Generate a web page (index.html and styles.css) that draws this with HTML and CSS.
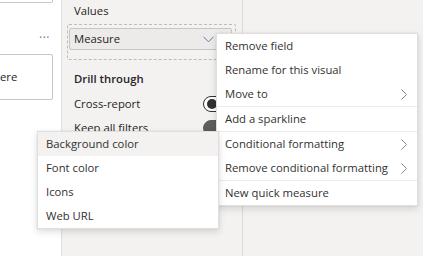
FILE: index.html
```html
<!DOCTYPE html>
<html>
<head>
<meta charset="utf-8">
<link rel="stylesheet" href="styles.css">
</head>
<body>
<div class="app">
  <div class="canvas">
    <div class="card-top"></div>
    <div class="more">···</div>
    <div class="card-drop"><span>ere</span></div>
  </div>
  <div class="pane">
    <div class="label">Values</div>
    <div class="well">
      <div class="field">
        <span>Measure</span>
        <svg class="chev" width="11" height="7" viewBox="0 0 11 7"><path d="M0.5 0.8 L5.5 5.8 L10.5 0.8" fill="none" stroke="#5b7fa8" stroke-width="1"/></svg>
      </div>
    </div>
    <div class="row heading">Drill through</div>
    <div class="row">
      <span>Cross-report</span>
      <span class="toggle off"><span class="knob"></span></span>
    </div>
    <div class="row">
      <span>Keep all filters</span>
      <span class="toggle on"><span class="knob"></span></span>
    </div>
  </div>
  <div class="rest"></div>
</div>

<div class="menu main-menu">
  <div class="item">Remove field</div>
  <div class="item">Rename for this visual</div>
  <div class="item sub">Move to<svg class="arrow" width="6" height="11" viewBox="0 0 6 11"><path d="M0.5 0.5 L5.5 5.5 L0.5 10.5" fill="none" stroke="#8a8886" stroke-width="1"/></svg></div>
  <div class="sep"></div>
  <div class="item">Add a sparkline</div>
  <div class="sep"></div>
  <div class="item sub">Conditional formatting<svg class="arrow" width="6" height="11" viewBox="0 0 6 11"><path d="M0.5 0.5 L5.5 5.5 L0.5 10.5" fill="none" stroke="#8a8886" stroke-width="1"/></svg></div>
  <div class="item sub">Remove conditional formatting<svg class="arrow" width="6" height="11" viewBox="0 0 6 11"><path d="M0.5 0.5 L5.5 5.5 L0.5 10.5" fill="none" stroke="#8a8886" stroke-width="1"/></svg></div>
  <div class="sep"></div>
  <div class="item">New quick measure</div>
</div>

<div class="menu sub-menu">
  <div class="item hover">Background color</div>
  <div class="item">Font color</div>
  <div class="item">Icons</div>
  <div class="item">Web URL</div>
</div>
</body>
</html>
```

FILE: styles.css
```css
* { box-sizing: border-box; }
html, body {
  margin: 0;
  padding: 0;
  width: 423px;
  height: 256px;
  overflow: hidden;
  background: #f3f2f1;
  font-family: "Open Sans", "Noto Sans", "Liberation Sans", sans-serif;
  font-size: 11.3px;
  color: #252423;
}
.app {
  display: flex;
  height: 256px;
}
.canvas {
  width: 62px;
  flex: none;
  background: #ffffff;
  border-right: 1px solid #e1dfdd;
  overflow: hidden;
  display: flex;
  flex-direction: column;
}
.card-top {
  width: 53px;
  height: 3px;
  border-right: 1px solid #c8c6c4;
  border-bottom: 1px solid #c8c6c4;
  border-bottom-right-radius: 2px;
}
.more {
  margin-top: 29px;
  width: 50px;
  text-align: right;
  color: #8a6bb0;
  font-size: 12px;
  line-height: 12px;
  letter-spacing: 0.5px;
}
.card-drop {
  margin-top: 10px;
  margin-left: -60px;
  width: 113px;
  height: 46px;
  border: 1px solid #c8c6c4;
  border-radius: 2px;
  display: flex;
  align-items: center;
  padding-left: 59px;
  padding-bottom: 1px;
  white-space: nowrap;
  color: #252423;
}
.pane {
  width: 181px;
  flex: none;
  border-right: 1px solid #dcdad8;
  padding-top: 3px;
}
.label {
  padding-left: 12px;
  line-height: 15px;
  padding-bottom: 1px;
}
.well {
  margin: 5px 0 7px 5px;
  width: 169px;
  height: 36px;
  border: 1px dashed #bebbb8;
  border-radius: 2px;
  padding: 3px 3px 8px 1px;
}
.field {
  height: 22px;
  background: #edebe9;
  border: 1px solid #c8c6c4;
  border-radius: 2px;
  display: flex;
  align-items: center;
  justify-content: space-between;
  padding: 0 17px 2px 4px;
}
.chev { display: block; margin-top: 2px; }
.row {
  height: 24px;
  padding-left: 12px;
  padding-bottom: 1px;
  display: flex;
  align-items: center;
  justify-content: space-between;
}
.heading { font-weight: 600; height: 25px; padding-bottom: 2px; }
.toggle {
  width: 36px;
  height: 16px;
  border-radius: 8px;
  position: relative;
  flex: none;
  display: flex;
  align-items: center;
  padding: 0 3px;
  margin-right: 3px;
}
.toggle.off { border: 1px solid #323130; background: #fff; }
.toggle.on { background: #605e5c; border: 1px solid #605e5c; justify-content: flex-end; }
.knob {
  width: 10px;
  height: 10px;
  border-radius: 50%;
  background: #323130;
}
.toggle.on .knob { background: #fff; }
.rest { flex: 1; }

.menu {
  position: absolute;
  background: #ffffff;
  border: 1px solid #e1dfdd;
  box-shadow: 0 3px 7px rgba(0,0,0,0.13), 0 0 2px rgba(0,0,0,0.08);
  color: #323130;
}
.main-menu {
  left: 216px;
  top: 33px;
  width: 202px;
}
.sub-menu {
  left: 37px;
  top: 131px;
  width: 182px;
}
.item {
  height: 24px;
  padding-left: 8px;
  padding-right: 10px;
  padding-bottom: 2px;
  display: flex;
  align-items: center;
  justify-content: space-between;
  white-space: nowrap;
}
.item .arrow { margin-top: 2px; }
.item.hover { background: #f3f2f1; }
.sep {
  height: 1px;
  background: #edebe9;
}
.arrow { display: block; }
```
